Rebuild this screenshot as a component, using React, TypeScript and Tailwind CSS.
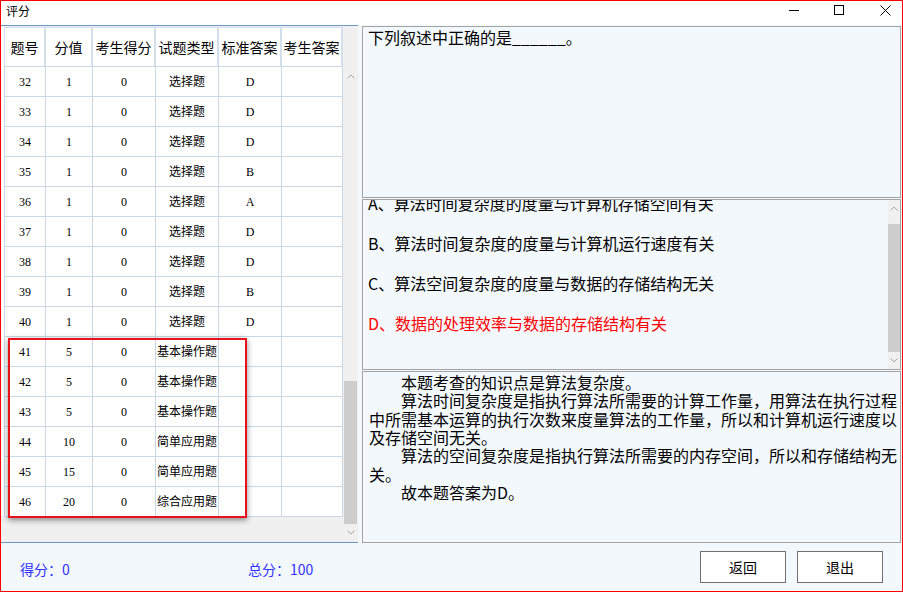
import React from "react"

type Row = [string, string, string, string, string]

const rows: Row[] = [
  ["32", "1", "0", "选择题", "D"],
  ["33", "1", "0", "选择题", "D"],
  ["34", "1", "0", "选择题", "D"],
  ["35", "1", "0", "选择题", "B"],
  ["36", "1", "0", "选择题", "A"],
  ["37", "1", "0", "选择题", "D"],
  ["38", "1", "0", "选择题", "D"],
  ["39", "1", "0", "选择题", "B"],
  ["40", "1", "0", "选择题", "D"],
  ["41", "5", "0", "基本操作题", ""],
  ["42", "5", "0", "基本操作题", ""],
  ["43", "5", "0", "基本操作题", ""],
  ["44", "10", "0", "简单应用题", ""],
  ["45", "15", "0", "简单应用题", ""],
  ["46", "20", "0", "综合应用题", ""],
]

const headers = ["题号", "分值", "考生得分", "试题类型", "标准答案", "考生答案"]
const widths = ["w-[41px]", "w-[47px]", "w-[63px]", "w-[63px]", "w-[63px]", "w-[61px]"]

function Chevron({ down = false }: { down?: boolean }) {
  return (
    <svg width="8" height="5" viewBox="0 0 8 5" className="block">
      <polyline
        points={down ? "0.5,0.5 4,4 7.5,0.5" : "0.5,4.5 4,1 7.5,4.5"}
        fill="none"
        stroke="#a6a6a6"
        strokeWidth="1"
      />
    </svg>
  )
}

function ScoreTable() {
  return (
    <div className="flex-1 bg-[#f0f0f0] pt-[1px]">
      <div className="flex h-[39px] bg-white">
        <div className="w-[3px] bg-white" />
        <div className="flex border-l border-[#d3dfeb] border-t border-t-[#d3dfeb]">
          {headers.map((h, i) => (
            <div
              key={h}
              className={`${widths[i]} flex items-center justify-center border-r-2 border-[#d3dfeb] text-[14px] text-black leading-none whitespace-nowrap`}
            >
              {h}
            </div>
          ))}
        </div>
      </div>
      {rows.map((r) => (
        <div key={r[0]} className="flex h-[30px] bg-white">
          <div className="w-[3px] bg-white" />
          <div className="flex border-l border-[#c9d8e7] border-t border-t-[#c9d8e7]">
            {r.concat([""]).map((c, i) => (
              <div
                key={i}
                className={`${widths[i]} flex items-center justify-center border-r border-[#c9d8e7] text-[12px] text-black leading-none whitespace-nowrap font-['Liberation_Serif','Noto_Sans_CJK_SC',serif]`}
              >
                {c}
              </div>
            ))}
          </div>
        </div>
      ))}
      <div className="ml-[4px] h-[1px] w-[338px] bg-[#c9d8e7]" />
    </div>
  )
}

function LeftScrollbar() {
  return (
    <div className="w-[15px] bg-[#f0f0f0] flex flex-col">
      <div className="h-[40px]" />
      <div className="h-[20px] flex items-center justify-center">
        <Chevron />
      </div>
      <div className="h-[295px]" />
      <div className="h-[143px] ml-[1px] mr-[1px] bg-[#cdcdcd]" />
      <div className="h-[17px] flex items-center justify-center">
        <Chevron down />
      </div>
    </div>
  )
}

const explanation: { text: string; indent: boolean }[] = [
  { text: "本题考查的知识点是算法复杂度。", indent: true },
  { text: "算法时间复杂度是指执行算法所需要的计算工作量，用算法在执行过程", indent: true },
  { text: "中所需基本运算的执行次数来度量算法的工作量，所以和计算机运行速度以", indent: false },
  { text: "及存储空间无关。", indent: false },
  { text: "算法的空间复杂度是指执行算法所需要的内存空间，所以和存储结构无", indent: true },
  { text: "关。", indent: false },
  { text: "故本题答案为D。", indent: true },
]

export default function App() {
  return (
    <div className="relative w-[903px] h-[592px] border border-[#ff0000] bg-[#f3f8fd] flex flex-col overflow-hidden font-['Noto_Sans_CJK_SC',sans-serif] text-black">
      {/* title bar */}
      <div className="h-[24px] bg-white flex items-start pt-[4px]">
        <span className="ml-[5px] -mt-[1px] text-[12px] leading-[14px]">评分</span>
        <svg width="10" height="10" viewBox="0 0 10 10" className="ml-auto">
          <line x1="0" y1="5.5" x2="10" y2="5.5" stroke="#000" strokeWidth="1" />
        </svg>
        <svg width="10" height="10" viewBox="0 0 10 10" className="ml-[35px]">
          <rect x="0.5" y="0.5" width="9" height="9" fill="none" stroke="#000" strokeWidth="1" />
        </svg>
        <svg width="11" height="11" viewBox="0 0 11 11" className="ml-[36px] mr-[11px]">
          <line x1="0.5" y1="0.5" x2="10.5" y2="10.5" stroke="#000" strokeWidth="1" />
          <line x1="10.5" y1="0.5" x2="0.5" y2="10.5" stroke="#000" strokeWidth="1" />
        </svg>
      </div>

      {/* main */}
      <div className="flex h-[518px]">
        <div className="w-[357px] flex border-t border-b border-[#6a96c8]">
          <ScoreTable />
          <LeftScrollbar />
        </div>

        <div className="flex-1 flex flex-col pl-[4px] pr-[1px] pt-[1px] gap-[1px]">
          {/* question */}
          <div className="h-[172px] border border-[#a3a3a3] bg-[#f3f8fd] pl-[5px]">
            <div className="text-[16px] leading-[20px] whitespace-nowrap">下列叙述中正确的是______。</div>
          </div>

          {/* options */}
          <div className="h-[171px] border border-[#a3a3a3] bg-[#f3f8fd] flex overflow-hidden">
            <div className="flex-1 overflow-hidden pl-[5px]">
              <div className="-mt-[17px] text-[16px]">
                <div className="h-[40px] leading-[40px] whitespace-nowrap">A、算法时间复杂度的度量与计算机存储空间有关</div>
                <div className="h-[40px] leading-[40px] whitespace-nowrap">B、算法时间复杂度的度量与计算机运行速度有关</div>
                <div className="h-[40px] leading-[40px] whitespace-nowrap">C、算法空间复杂度的度量与数据的存储结构无关</div>
                <div className="h-[40px] leading-[40px] whitespace-nowrap text-[#ff0000]">D、数据的处理效率与数据的存储结构有关</div>
              </div>
            </div>
            <div className="w-[12px] bg-[#f0f0f0] flex flex-col">
              <div className="h-[17px] flex items-center justify-center">
                <Chevron />
              </div>
              <div className="h-[7px]" />
              <div className="h-[128px] bg-[#cdcdcd]" />
              <div className="h-[17px] flex items-center justify-center">
                <Chevron down />
              </div>
            </div>
          </div>

          {/* explanation */}
          <div className="h-[172px] border border-[#a3a3a3] bg-[#f3f8fd] pl-[6px] pt-[1px]">
            {explanation.map((l, i) => (
              <div
                key={i}
                className={`${l.indent ? "pl-[32px]" : ""} text-[16px] leading-[18.33px] whitespace-nowrap`}
              >
                {l.text}
              </div>
            ))}
          </div>
        </div>
      </div>

      {/* bottom bar */}
      <div className="flex-1 flex items-center pl-[19px] pr-[19px]">
        <span className="w-[228px] mt-[4px] text-[14px] text-[#3030ff]">得分：0</span>
        <span className="mt-[4px] text-[14px] text-[#3030ff]">总分：100</span>
        <button className="ml-auto w-[86px] h-[32px] border border-[#707070] bg-white text-[14px] text-black">
          返回
        </button>
        <button className="ml-[11px] w-[86px] h-[32px] border border-[#707070] bg-white text-[14px] text-black">
          退出
        </button>
      </div>

      {/* highlight */}
      <div className="absolute left-[7px] top-[337px] w-[239px] h-[180px] border-2 border-[#e8121a] shadow-[0_2px_6px_rgba(0,0,0,0.45)]" />
    </div>
  )
}
